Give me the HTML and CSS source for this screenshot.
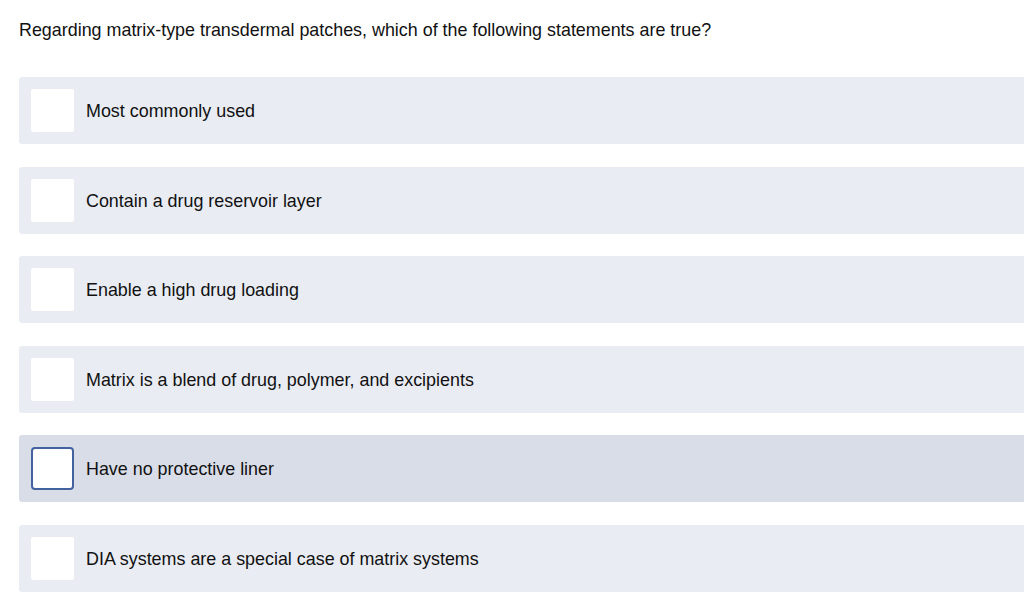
FILE: index.html
```html
<!DOCTYPE html>
<html>
<head>
<meta charset="utf-8">
<link rel="stylesheet" href="styles.css">
</head>
<body>
<div class="page">
  <p class="question">Regarding matrix-type transdermal patches, which of the following statements are true?</p>
  <div class="options">
    <label class="option"><span class="box"></span><span class="label">Most commonly used</span></label>
    <label class="option"><span class="box"></span><span class="label">Contain a drug reservoir layer</span></label>
    <label class="option"><span class="box"></span><span class="label">Enable a high drug loading</span></label>
    <label class="option"><span class="box"></span><span class="label">Matrix is a blend of drug, polymer, and excipients</span></label>
    <label class="option active"><span class="box"></span><span class="label">Have no protective liner</span></label>
    <label class="option"><span class="box"></span><span class="label">DIA systems are a special case of matrix systems</span></label>
  </div>
</div>
</body>
</html>
```

FILE: styles.css
```css
html, body {
  margin: 0;
  padding: 0;
  background: #ffffff;
  overflow: hidden;
}
.page {
  padding: 20px 0 0 19px;
  font-family: "Liberation Sans", Arial, sans-serif;
  color: #111111;
}
.question {
  margin: 0;
  font-size: 17.9px;
  line-height: 21px;
}
.options {
  margin-top: 36px;
  display: flex;
  flex-direction: column;
  gap: 22.6px;
  margin-right: -20px;
}
.option {
  display: flex;
  align-items: center;
  height: 67px;
  padding-left: 12px;
  background: #e9ecf3;
  border-radius: 3px;
  box-sizing: border-box;
}
.option.active {
  background: #d9dde8;
}
.box {
  width: 43px;
  height: 43px;
  background: #ffffff;
  border-radius: 2px;
  box-sizing: border-box;
  flex-shrink: 0;
}
.option.active .box {
  border: 2px solid #4262a0;
  border-radius: 4px;
}
.label {
  margin-left: 12px;
  padding-top: 2px;
  font-size: 17.9px;
  color: #111111;
}
```
